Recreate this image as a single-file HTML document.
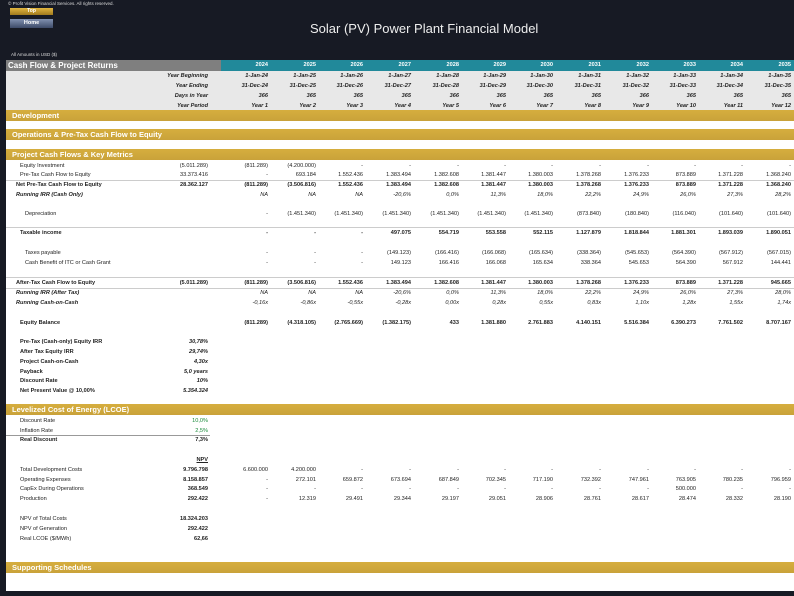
<!DOCTYPE html>
<html><head><meta charset="utf-8"><style>
*{margin:0;padding:0;box-sizing:border-box}
body{width:794px;height:596px;background:#171a24;font-family:"Liberation Sans",sans-serif;position:relative;overflow:hidden;color:#222}
.abs{position:absolute}
.sheet{position:absolute;left:6px;top:60px;width:788px;height:531px;background:#fff}
.band{position:absolute;left:6px;width:788px;height:11px;background:linear-gradient(#d6ae3e,#c9a23a);color:#fff;font-weight:bold;font-size:7.5px;line-height:11px;padding-left:6px}
.r{position:absolute;left:0;width:794px;height:10px;font-size:5.6px;line-height:10px}
.r i{font-style:normal;position:absolute;width:60px;text-align:right;top:0}
.r .l{position:absolute;left:20px;text-align:left;width:200px}
.b{font-weight:bold}.it{font-style:italic!important}
.r.it i{font-style:italic}
.k0{left:148px}.k1{left:208px}.k2{left:256px}.k3{left:303px}.k4{left:351px}.k5{left:399px}.k6{left:446px}.k7{left:493px}.k8{left:541px}.k9{left:589px}.k10{left:636px}.k11{left:683px}.k12{left:731px}
.line{position:absolute;height:1px;background:#ccc}
.g{color:#1a8a3a}
</style></head><body>
<div class="abs" style="left:8px;top:1px;font-size:4.5px;color:#ddd">© Profit Vision Financial Services. All rights reserved.</div>
<div class="abs" style="left:10px;top:8px;width:43px;height:7px;background:linear-gradient(#e2b640,#a07a1e);color:#fff;font-size:5px;line-height:7px;text-align:center;font-weight:bold">Top</div>
<div class="abs" style="left:10px;top:19px;width:43px;height:9px;background:linear-gradient(#8191b0,#3d4a68);color:#fff;font-size:5.5px;line-height:9px;text-align:center;font-weight:bold">Home</div>
<div class="abs" style="left:310px;top:21px;font-size:13px;color:#eee">Solar (PV) Power Plant Financial Model</div>
<div class="abs" style="left:11px;top:52px;font-size:4.5px;color:#ddd">All Amounts in  USD ($)</div>
<div class="sheet"></div>
<div class="abs" style="left:6px;top:60px;width:215px;height:11px;background:#7f7f7f;color:#fff;font-weight:bold;font-size:8px;line-height:11px;padding-left:2px">Cash Flow &amp; Project Returns</div>
<div class="abs" style="left:221px;top:60px;width:573px;height:11px;background:#21899a"></div>
<div class="abs" style="left:6px;top:71px;width:788px;height:39px;background:#e8e8e8"></div>
<div class="r b" style="top:60px;height:11px;line-height:11px;color:#fff"><i class="k1">2024</i><i class="k2">2025</i><i class="k3">2026</i><i class="k4">2027</i><i class="k5">2028</i><i class="k6">2029</i><i class="k7">2030</i><i class="k8">2031</i><i class="k9">2032</i><i class="k10">2033</i><i class="k11">2034</i><i class="k12">2035</i></div>
<div class="r b it" style="top:71px"><i class="k0">Year Beginning</i><i class="k1">1-Jan-24</i><i class="k2">1-Jan-25</i><i class="k3">1-Jan-26</i><i class="k4">1-Jan-27</i><i class="k5">1-Jan-28</i><i class="k6">1-Jan-29</i><i class="k7">1-Jan-30</i><i class="k8">1-Jan-31</i><i class="k9">1-Jan-32</i><i class="k10">1-Jan-33</i><i class="k11">1-Jan-34</i><i class="k12">1-Jan-35</i></div>
<div class="r b it" style="top:81px"><i class="k0">Year Ending</i><i class="k1">31-Dec-24</i><i class="k2">31-Dec-25</i><i class="k3">31-Dec-26</i><i class="k4">31-Dec-27</i><i class="k5">31-Dec-28</i><i class="k6">31-Dec-29</i><i class="k7">31-Dec-30</i><i class="k8">31-Dec-31</i><i class="k9">31-Dec-32</i><i class="k10">31-Dec-33</i><i class="k11">31-Dec-34</i><i class="k12">31-Dec-35</i></div>
<div class="r b it" style="top:91px"><i class="k0">Days in Year</i><i class="k1">366</i><i class="k2">365</i><i class="k3">365</i><i class="k4">365</i><i class="k5">366</i><i class="k6">365</i><i class="k7">365</i><i class="k8">365</i><i class="k9">366</i><i class="k10">365</i><i class="k11">365</i><i class="k12">365</i></div>
<div class="r b it" style="top:101px"><i class="k0">Year Period</i><i class="k1">Year 1</i><i class="k2">Year 2</i><i class="k3">Year 3</i><i class="k4">Year 4</i><i class="k5">Year 5</i><i class="k6">Year 6</i><i class="k7">Year 7</i><i class="k8">Year 8</i><i class="k9">Year 9</i><i class="k10">Year 10</i><i class="k11">Year 11</i><i class="k12">Year 12</i></div>
<div class="band" style="top:110px">Development</div>
<div class="band" style="top:129px">Operations &amp; Pre-Tax Cash Flow to Equity</div>
<div class="band" style="top:149px">Project Cash Flows &amp; Key Metrics</div>

<div class="r" style="top:161px"><span class="l">Equity Investment</span><i class="k0">(5.011.289)</i><i class="k1">(811.289)</i><i class="k2">(4.200.000)</i><i class="k3">-</i><i class="k4">-</i><i class="k5">-</i><i class="k6">-</i><i class="k7">-</i><i class="k8">-</i><i class="k9">-</i><i class="k10">-</i><i class="k11">-</i><i class="k12">-</i></div>
<div class="r" style="top:170px"><span class="l">Pre-Tax Cash Flow to Equity</span><i class="k0">33.373.416</i><i class="k1">-</i><i class="k2">693.184</i><i class="k3">1.552.436</i><i class="k4">1.383.494</i><i class="k5">1.382.608</i><i class="k6">1.381.447</i><i class="k7">1.380.003</i><i class="k8">1.378.268</i><i class="k9">1.376.233</i><i class="k10">873.889</i><i class="k11">1.371.228</i><i class="k12">1.368.240</i></div>
<div class="line" style="left:6px;top:180px;width:788px"></div>
<div class="r b" style="top:180px"><span class="l" style="left:16px">Net Pre-Tax Cash Flow to Equity</span><i class="k0">28.362.127</i><i class="k1">(811.289)</i><i class="k2">(3.506.816)</i><i class="k3">1.552.436</i><i class="k4">1.383.494</i><i class="k5">1.382.608</i><i class="k6">1.381.447</i><i class="k7">1.380.003</i><i class="k8">1.378.268</i><i class="k9">1.376.233</i><i class="k10">873.889</i><i class="k11">1.371.228</i><i class="k12">1.368.240</i></div>
<div class="r it" style="top:190px"><span class="l b" style="left:16px;font-style:italic">Running IRR (Cash Only)</span><i class="k1">NA</i><i class="k2">NA</i><i class="k3">NA</i><i class="k4">-20,6%</i><i class="k5">0,0%</i><i class="k6">11,3%</i><i class="k7">18,0%</i><i class="k8">22,2%</i><i class="k9">24,9%</i><i class="k10">26,0%</i><i class="k11">27,3%</i><i class="k12">28,2%</i></div>
<div class="r" style="top:209px"><span class="l" style="left:25px">Depreciation</span><i class="k1">-</i><i class="k2">(1.451.340)</i><i class="k3">(1.451.340)</i><i class="k4">(1.451.340)</i><i class="k5">(1.451.340)</i><i class="k6">(1.451.340)</i><i class="k7">(1.451.340)</i><i class="k8">(873.840)</i><i class="k9">(180.840)</i><i class="k10">(116.040)</i><i class="k11">(101.640)</i><i class="k12">(101.640)</i></div>
<div class="line" style="left:6px;top:227px;width:788px"></div>
<div class="r b" style="top:228px"><span class="l">Taxable income</span><i class="k1">-</i><i class="k2">-</i><i class="k3">-</i><i class="k4">497.075</i><i class="k5">554.719</i><i class="k6">553.558</i><i class="k7">552.115</i><i class="k8">1.127.879</i><i class="k9">1.818.844</i><i class="k10">1.881.301</i><i class="k11">1.893.039</i><i class="k12">1.890.051</i></div>
<div class="r" style="top:248px"><span class="l" style="left:25px">Taxes payable</span><i class="k1">-</i><i class="k2">-</i><i class="k3">-</i><i class="k4">(149.123)</i><i class="k5">(166.416)</i><i class="k6">(166.068)</i><i class="k7">(165.634)</i><i class="k8">(338.364)</i><i class="k9">(545.653)</i><i class="k10">(564.390)</i><i class="k11">(567.912)</i><i class="k12">(567.015)</i></div>
<div class="r" style="top:258px"><span class="l" style="left:25px">Cash Benefit of ITC or Cash Grant</span><i class="k1">-</i><i class="k2">-</i><i class="k3">-</i><i class="k4">149.123</i><i class="k5">166.416</i><i class="k6">166.068</i><i class="k7">165.634</i><i class="k8">338.364</i><i class="k9">545.653</i><i class="k10">564.390</i><i class="k11">567.912</i><i class="k12">144.441</i></div>
<div class="line" style="left:6px;top:277px;width:788px"></div>
<div class="r b" style="top:278px"><span class="l" style="left:16px">After-Tax Cash Flow to Equity</span><i class="k0">(5.011.289)</i><i class="k1">(811.289)</i><i class="k2">(3.506.816)</i><i class="k3">1.552.436</i><i class="k4">1.383.494</i><i class="k5">1.382.608</i><i class="k6">1.381.447</i><i class="k7">1.380.003</i><i class="k8">1.378.268</i><i class="k9">1.376.233</i><i class="k10">873.889</i><i class="k11">1.371.228</i><i class="k12">945.665</i></div>
<div class="line" style="left:6px;top:288px;width:788px"></div>
<div class="r it" style="top:288px"><span class="l b" style="left:16px;font-style:italic">Running IRR (After Tax)</span><i class="k1">NA</i><i class="k2">NA</i><i class="k3">NA</i><i class="k4">-20,6%</i><i class="k5">0,0%</i><i class="k6">11,3%</i><i class="k7">18,0%</i><i class="k8">22,2%</i><i class="k9">24,9%</i><i class="k10">26,0%</i><i class="k11">27,3%</i><i class="k12">28,0%</i></div>
<div class="r it" style="top:298px"><span class="l b" style="left:16px;font-style:italic">Running Cash-on-Cash</span><i class="k1">-0,16x</i><i class="k2">-0,86x</i><i class="k3">-0,55x</i><i class="k4">-0,28x</i><i class="k5">0,00x</i><i class="k6">0,28x</i><i class="k7">0,55x</i><i class="k8">0,83x</i><i class="k9">1,10x</i><i class="k10">1,28x</i><i class="k11">1,55x</i><i class="k12">1,74x</i></div>
<div class="r b" style="top:318px"><span class="l">Equity Balance</span><i class="k1">(811.289)</i><i class="k2">(4.318.105)</i><i class="k3">(2.765.669)</i><i class="k4">(1.382.175)</i><i class="k5">433</i><i class="k6">1.381.880</i><i class="k7">2.761.883</i><i class="k8">4.140.151</i><i class="k9">5.516.384</i><i class="k10">6.390.273</i><i class="k11">7.761.502</i><i class="k12">8.707.167</i></div>
<div class="r b" style="top:337px"><span class="l">Pre-Tax (Cash-only) Equity IRR</span><i class="k0 it">30,78%</i></div>
<div class="r b" style="top:347px"><span class="l">After Tax Equity IRR</span><i class="k0 it">29,74%</i></div>
<div class="r b" style="top:357px"><span class="l">Project Cash-on-Cash</span><i class="k0 it">4,30x</i></div>
<div class="r b" style="top:367px"><span class="l">Payback</span><i class="k0 it">5,0 years</i></div>
<div class="r b" style="top:376px"><span class="l">Discount Rate</span><i class="k0 it">10%</i></div>
<div class="r b" style="top:386px"><span class="l">Net Present Value @ 10,00%</span><i class="k0 it">5.354.324</i></div>
<div class="band" style="top:404px">Levelized Cost of Energy (LCOE)</div>
<div class="r" style="top:416px"><span class="l">Discount Rate</span><i class="k0 g">10,0%</i></div>
<div class="r" style="top:426px"><span class="l">Inflation Rate</span><i class="k0 g">2,5%</i></div>
<div class="line" style="left:6px;top:435px;width:204px;background:#999"></div>
<div class="r b" style="top:435px"><span class="l">Real Discount</span><i class="k0">7,3%</i></div>
<div class="r b" style="top:455px"><i class="k0" style="text-decoration:underline">NPV</i></div>
<div class="r" style="top:465px"><span class="l">Total Development Costs</span><i class="k0 b">9.796.798</i><i class="k1">6.600.000</i><i class="k2">4.200.000</i><i class="k3">-</i><i class="k4">-</i><i class="k5">-</i><i class="k6">-</i><i class="k7">-</i><i class="k8">-</i><i class="k9">-</i><i class="k10">-</i><i class="k11">-</i><i class="k12">-</i></div>
<div class="r" style="top:475px"><span class="l">Operating Expenses</span><i class="k0 b">8.158.857</i><i class="k1">-</i><i class="k2">272.101</i><i class="k3">659.872</i><i class="k4">673.694</i><i class="k5">687.849</i><i class="k6">702.345</i><i class="k7">717.190</i><i class="k8">732.392</i><i class="k9">747.961</i><i class="k10">763.905</i><i class="k11">780.235</i><i class="k12">796.959</i></div>
<div class="r" style="top:484px"><span class="l">CapEx During Operations</span><i class="k0 b">368.549</i><i class="k1">-</i><i class="k2">-</i><i class="k3">-</i><i class="k4">-</i><i class="k5">-</i><i class="k6">-</i><i class="k7">-</i><i class="k8">-</i><i class="k9">-</i><i class="k10">500.000</i><i class="k11">-</i><i class="k12">-</i></div>
<div class="r" style="top:494px"><span class="l">Production</span><i class="k0 b">292.422</i><i class="k1">-</i><i class="k2">12.319</i><i class="k3">29.491</i><i class="k4">29.344</i><i class="k5">29.197</i><i class="k6">29.051</i><i class="k7">28.906</i><i class="k8">28.761</i><i class="k9">28.617</i><i class="k10">28.474</i><i class="k11">28.332</i><i class="k12">28.190</i></div>
<div class="r" style="top:514px"><span class="l">NPV of Total Costs</span><i class="k0 b">18.324.203</i></div>
<div class="r" style="top:524px"><span class="l">NPV of Generation</span><i class="k0 b">292.422</i></div>
<div class="r" style="top:534px"><span class="l">Real LCOE  ($/MWh)</span><i class="k0 b">62,66</i></div>
<div class="band" style="top:562px">Supporting Schedules</div>
</body></html>
